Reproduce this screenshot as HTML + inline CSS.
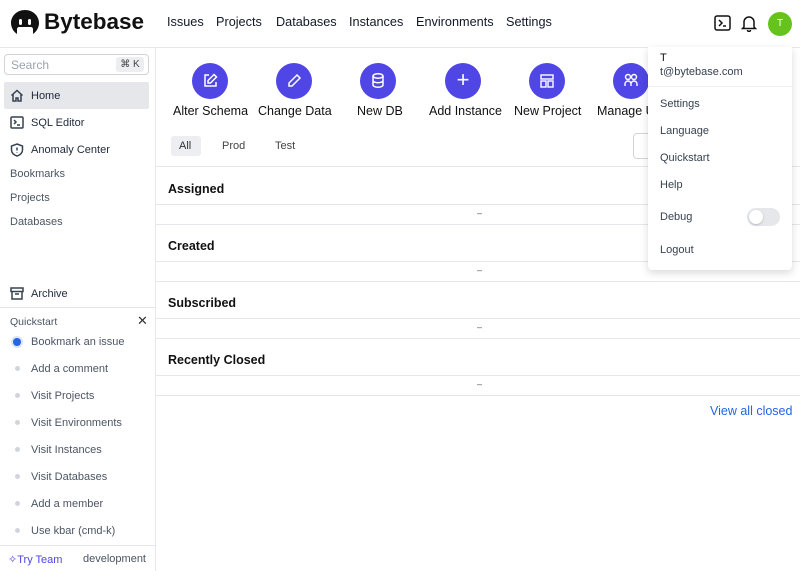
<!DOCTYPE html>
<html><head><meta charset="utf-8"><style>
*{box-sizing:border-box;margin:0;padding:0}
body{width:800px;height:571px;overflow:hidden;background:#fff;font-family:"Liberation Sans",sans-serif;color:#111827;position:relative}
.a{position:absolute}
.nav{font-size:12.7px;top:15px}
.sb{font-size:11px;color:#1f2937}
.ic{stroke:#374151;fill:none;stroke-width:1.5}
.btn{width:36px;height:36px;border-radius:50%;background:#4f46e5;top:63px}
.bl{font-size:12.5px;top:104px;color:#111}
.line{left:156px;width:644px;height:1px;background:#e5e7eb}
.sec{left:168px;font-size:12.5px;font-weight:bold;color:#111}
.dash{left:477px;font-size:9px;color:#555}
.qs{left:31px;font-size:11px;color:#4b5563}
.dot{left:15px;width:5px;height:5px;border-radius:50%;background:#d1d5db}
.dm{left:660px;font-size:11px;color:#374151}
</style></head><body>
<svg class="a" style="left:10px;top:9px" width="30" height="28" viewBox="0 0 30 28"><path d="M15 1C7 1 1 7 1 14c0 5 3 9 6 11v-5c0 -1 1 -2 2 -2h12c1 0 2 1 2 2v5c3-2 6-6 6-11C29 7 23 1 15 1z" fill="#111"/><rect x="9" y="10" width="3" height="6" rx="1.5" fill="#fff"/><rect x="18" y="10" width="3" height="6" rx="1.5" fill="#fff"/></svg>
<div class="a" style="left:44px;top:9px;font-size:22.5px;font-weight:bold;color:#111">Bytebase</div>
<div class="a nav" style="left:167px">Issues</div>
<div class="a nav" style="left:216px">Projects</div>
<div class="a nav" style="left:276px">Databases</div>
<div class="a nav" style="left:349px">Instances</div>
<div class="a nav" style="left:416px">Environments</div>
<div class="a nav" style="left:506px">Settings</div>
<svg class="a" style="left:714px;top:15px" width="17" height="16"><rect x="1" y="1" width="15" height="14" rx="2" fill="none" stroke="#111" stroke-width="1.5"/><path d="M5 5l3 3-3 3M9 11h3" fill="none" stroke="#111" stroke-width="1.5"/></svg>
<svg class="a" style="left:741px;top:14px" width="16" height="18"><path d="M3 13V8a5 5 0 0110 0v5l1.5 1.5h-13zM6.5 16a1.5 1.5 0 003 0" fill="none" stroke="#111" stroke-width="1.5"/></svg>
<div class="a" style="left:768px;top:12px;width:24px;height:24px;border-radius:50%;background:#65c31c;color:#fff;font-size:10px;text-align:center;line-height:24px">T</div>
<div class="a" style="left:0;top:47px;width:800px;height:1px;background:#e5e7eb"></div>
<div class="a" style="left:155px;top:47px;width:1px;height:524px;background:#e5e7eb"></div>
<div class="a" style="left:4px;top:54px;width:145px;height:21px;border:1px solid #d1d5db;border-radius:4px"></div>
<div class="a sb" style="left:11px;top:58px;font-size:12px;color:#9ca3af">Search</div>
<div class="a" style="left:116px;top:57px;width:28px;height:15px;background:#eceef1;border-radius:3px;font-size:10px;text-align:center;line-height:15px;color:#444">⌘ K</div>
<div class="a" style="left:4px;top:82px;width:145px;height:27px;background:#e5e7eb;border-radius:2px"></div>
<svg class="a" style="left:10px;top:89px" width="14" height="13"><path class="ic" d="M1.5 6.5L7 1.5l5.5 5M3 5.5v6.5h3v-3h2v3h3V5.5"/></svg>
<div class="a sb" style="left:31px;top:90px">Home</div>
<svg class="a" style="left:10px;top:116px" width="14" height="13"><rect class="ic" x="1" y="1" width="12" height="11" rx="1"/><path class="ic" d="M4 4l2 2-2 2M7 9h3"/></svg>
<div class="a sb" style="left:31px;top:117px">SQL Editor</div>
<svg class="a" style="left:10px;top:143px" width="14" height="14"><path class="ic" d="M7 1l5.5 2v4c0 3-2.5 5-5.5 6C4 12 1.5 10 1.5 7V3z M7 4.5v3 M7 9.5v.5"/></svg>
<div class="a sb" style="left:31px;top:144px">Anomaly Center</div>
<div class="a sb" style="left:10px;top:168px;color:#4b5563">Bookmarks</div>
<div class="a sb" style="left:10px;top:192px;color:#4b5563">Projects</div>
<div class="a sb" style="left:10px;top:216px;color:#4b5563">Databases</div>
<svg class="a" style="left:10px;top:287px" width="14" height="13"><rect class="ic" x="1" y="1" width="12" height="3.5"/><path class="ic" d="M2 4.5V12h10V4.5M5 7h4"/></svg>
<div class="a sb" style="left:31px;top:288px">Archive</div>
<div class="a" style="left:0;top:307px;width:155px;height:1px;background:#e5e7eb"></div>
<div class="a" style="left:10px;top:316px;font-size:10.5px;color:#4b5563">Quickstart</div>
<div class="a" style="left:137px;top:313px;font-size:13px;color:#333">✕</div>
<div class="a" style="left:13px;top:338px;width:8px;height:8px;border-radius:50%;background:#2563eb;box-shadow:0 0 0 2px #dbe4fb"></div>
<div class="a qs" style="top:336px">Bookmark an issue</div>
<div class="a dot" style="top:366px"></div><div class="a qs" style="top:363px">Add a comment</div>
<div class="a dot" style="top:393px"></div><div class="a qs" style="top:390px">Visit Projects</div>
<div class="a dot" style="top:420px"></div><div class="a qs" style="top:417px">Visit Environments</div>
<div class="a dot" style="top:447px"></div><div class="a qs" style="top:444px">Visit Instances</div>
<div class="a dot" style="top:474px"></div><div class="a qs" style="top:471px">Visit Databases</div>
<div class="a dot" style="top:501px"></div><div class="a qs" style="top:498px">Add a member</div>
<div class="a dot" style="top:528px"></div><div class="a qs" style="top:525px">Use kbar (cmd-k)</div>
<div class="a" style="left:0;top:545px;width:155px;height:1px;background:#e5e7eb"></div>
<div class="a" style="left:8px;top:553px;font-size:11px;color:#4f46e5">✧Try Team</div>
<div class="a" style="left:83px;top:553px;font-size:11px;color:#4b5563">development</div>
<div class="a btn" style="left:192px"></div><div class="a btn" style="left:276px"></div><div class="a btn" style="left:360px"></div><div class="a btn" style="left:445px"></div><div class="a btn" style="left:529px"></div><div class="a btn" style="left:613px"></div>
<svg class="a" style="left:202px;top:73px" width="16" height="16"><path d="M7 2H3v11h11V9M12 1.5l2.5 2.5-6 6H6V7.5z" fill="none" stroke="#fff" stroke-width="1.5"/></svg>
<svg class="a" style="left:286px;top:73px" width="16" height="16"><path d="M11 2l3 3-8 8H3v-3z" fill="none" stroke="#fff" stroke-width="1.5"/></svg>
<svg class="a" style="left:370px;top:72px" width="16" height="18"><ellipse cx="8" cy="4" rx="5" ry="2.2" fill="none" stroke="#fff" stroke-width="1.5"/><path d="M3 4v9c0 1.2 2.2 2.2 5 2.2s5-1 5-2.2V4M3 8.5c0 1.2 2.2 2.2 5 2.2s5-1 5-2.2" fill="none" stroke="#fff" stroke-width="1.5"/></svg>
<div class="a" style="left:445px;top:63px;width:36px;height:36px;color:#fff;font-size:22px;text-align:center;line-height:34px">+</div>
<svg class="a" style="left:539px;top:73px" width="16" height="16"><rect x="2" y="2" width="12" height="4" fill="none" stroke="#fff" stroke-width="1.4"/><rect x="2" y="8" width="5" height="6" fill="none" stroke="#fff" stroke-width="1.4"/><rect x="9" y="8" width="5" height="6" fill="none" stroke="#fff" stroke-width="1.4"/></svg>
<svg class="a" style="left:623px;top:72px" width="16" height="17"><circle cx="5" cy="5" r="2.5" fill="none" stroke="#fff" stroke-width="1.4"/><circle cx="11" cy="5" r="2.5" fill="none" stroke="#fff" stroke-width="1.4"/><path d="M2 14v-2a3 3 0 016 0v2M8 14v-2a3 3 0 016 0v2" fill="none" stroke="#fff" stroke-width="1.4"/></svg>
<div class="a bl" style="left:173px">Alter Schema</div>
<div class="a bl" style="left:258px">Change Data</div>
<div class="a bl" style="left:357px">New DB</div>
<div class="a bl" style="left:429px">Add Instance</div>
<div class="a bl" style="left:514px">New Project</div>
<div class="a bl" style="left:597px">Manage U</div>
<div class="a" style="left:171px;top:136px;width:30px;height:20px;background:#eceef1;border-radius:3px"></div>
<div class="a" style="left:179px;top:140px;font-size:11px;color:#333">All</div>
<div class="a" style="left:222px;top:140px;font-size:11px;color:#444">Prod</div>
<div class="a" style="left:275px;top:140px;font-size:11px;color:#444">Test</div>
<div class="a" style="left:633px;top:133px;width:30px;height:26px;border:1px solid #d1d5db;border-radius:4px"></div>
<div class="a line" style="top:166px"></div>
<div class="a sec" style="top:182px">Assigned</div>
<div class="a line" style="top:204px"></div><div class="a dash" style="top:208px">–</div><div class="a line" style="top:224px"></div>
<div class="a sec" style="top:239px">Created</div>
<div class="a line" style="top:261px"></div><div class="a dash" style="top:265px">–</div><div class="a line" style="top:281px"></div>
<div class="a sec" style="top:296px">Subscribed</div>
<div class="a line" style="top:318px"></div><div class="a dash" style="top:322px">–</div><div class="a line" style="top:338px"></div>
<div class="a sec" style="top:353px">Recently Closed</div>
<div class="a line" style="top:375px"></div><div class="a dash" style="top:379px">–</div><div class="a line" style="top:395px"></div>
<div class="a" style="left:710px;top:404px;font-size:12.5px;color:#2563eb">View all closed</div>
<div class="a" style="left:648px;top:47px;width:144px;height:223px;background:#fff;box-shadow:0 3px 8px rgba(0,0,0,.15);border-radius:0 0 4px 4px"></div>
<div class="a dm" style="top:52px;color:#111">T</div>
<div class="a dm" style="top:66px">t@bytebase.com</div>
<div class="a" style="left:648px;top:86px;width:144px;height:1px;background:#eee"></div>
<div class="a dm" style="top:98px">Settings</div>
<div class="a dm" style="top:125px">Language</div>
<div class="a dm" style="top:152px">Quickstart</div>
<div class="a dm" style="top:179px">Help</div>
<div class="a dm" style="top:211px">Debug</div>
<div class="a" style="left:747px;top:208px;width:33px;height:18px;border-radius:9px;background:#e5e7eb"></div>
<div class="a" style="left:749px;top:210px;width:14px;height:14px;border-radius:50%;background:#fff;box-shadow:0 1px 2px rgba(0,0,0,.2)"></div>
<div class="a dm" style="top:244px">Logout</div>
</body></html>
